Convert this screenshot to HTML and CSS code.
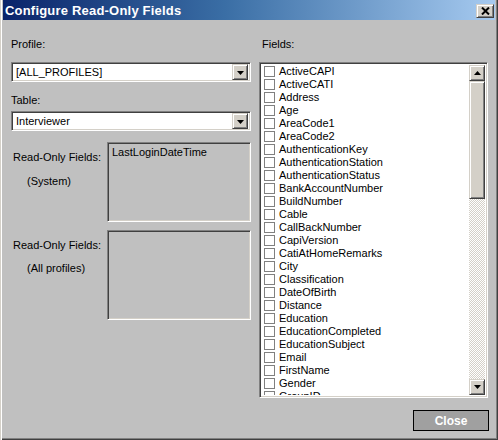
FILE: index.html
```html
<!DOCTYPE html>
<html>
<head>
<meta charset="utf-8">
<title>Configure Read-Only Fields</title>
<link rel="stylesheet" href="styles.css">
</head>
<body>
<div class="window">
  <div class="titlebar">
    <span class="title">Configure Read-Only Fields</span>
    <span class="close-x raised">
      <svg width="9" height="8" viewBox="0 0 9 8"><path d="M1 0.5 L8 7.5 M8 0.5 L1 7.5" stroke="#000" stroke-width="2" fill="none"/></svg>
    </span>
  </div>
  <div class="body">
    <div class="main">
      <div class="left">
        <div class="label">Profile:</div>
        <div class="combo sunken">
          <span class="combo-text">[ALL_PROFILES]</span>
          <span class="combo-btn raised"><svg width="7" height="4" viewBox="0 0 7 4"><path d="M0 0 H7 L3.5 4 Z" fill="#000"/></svg></span>
        </div>
        <div class="label label-table">Table:</div>
        <div class="combo combo-table sunken">
          <span class="combo-text">Interviewer</span>
          <span class="combo-btn raised"><svg width="7" height="4" viewBox="0 0 7 4"><path d="M0 0 H7 L3.5 4 Z" fill="#000"/></svg></span>
        </div>
        <div class="ro-row ro-row-1">
          <div class="ro-labels">
            <div class="ro-title">Read-Only Fields:</div>
            <div class="ro-sub">(System)</div>
          </div>
          <div class="ro-box sunken">LastLoginDateTime</div>
        </div>
        <div class="ro-row ro-row-2">
          <div class="ro-labels">
            <div class="ro-title">Read-Only Fields:</div>
            <div class="ro-sub ro-sub-2">(All profiles)</div>
          </div>
          <div class="ro-box sunken"></div>
        </div>
      </div>
      <div class="right">
        <div class="label fields-label">Fields:</div>
        <div class="list sunken">
          <div class="items">
            <div class="row"><span class="cb"></span>ActiveCAPI</div>
            <div class="row"><span class="cb"></span>ActiveCATI</div>
            <div class="row"><span class="cb"></span>Address</div>
            <div class="row"><span class="cb"></span>Age</div>
            <div class="row"><span class="cb"></span>AreaCode1</div>
            <div class="row"><span class="cb"></span>AreaCode2</div>
            <div class="row"><span class="cb"></span>AuthenticationKey</div>
            <div class="row"><span class="cb"></span>AuthenticationStation</div>
            <div class="row"><span class="cb"></span>AuthenticationStatus</div>
            <div class="row"><span class="cb"></span>BankAccountNumber</div>
            <div class="row"><span class="cb"></span>BuildNumber</div>
            <div class="row"><span class="cb"></span>Cable</div>
            <div class="row"><span class="cb"></span>CallBackNumber</div>
            <div class="row"><span class="cb"></span>CapiVersion</div>
            <div class="row"><span class="cb"></span>CatiAtHomeRemarks</div>
            <div class="row"><span class="cb"></span>City</div>
            <div class="row"><span class="cb"></span>Classification</div>
            <div class="row"><span class="cb"></span>DateOfBirth</div>
            <div class="row"><span class="cb"></span>Distance</div>
            <div class="row"><span class="cb"></span>Education</div>
            <div class="row"><span class="cb"></span>EducationCompleted</div>
            <div class="row"><span class="cb"></span>EducationSubject</div>
            <div class="row"><span class="cb"></span>Email</div>
            <div class="row"><span class="cb"></span>FirstName</div>
            <div class="row"><span class="cb"></span>Gender</div>
            <div class="row"><span class="cb"></span>GroupID</div>
          </div>
          <div class="scrollbar">
            <span class="sb-btn raised"><svg width="7" height="4" viewBox="0 0 7 4"><path d="M0 4 H7 L3.5 0 Z" fill="#000"/></svg></span>
            <span class="sb-thumb raised"></span>
            <span class="sb-track"></span>
            <span class="sb-btn raised"><svg width="7" height="4" viewBox="0 0 7 4"><path d="M0 0 H7 L3.5 4 Z" fill="#000"/></svg></span>
          </div>
        </div>
      </div>
    </div>
    <div class="footer">
      <button class="close-btn">Close</button>
    </div>
  </div>
</div>
</body>
</html>
```
FILE: styles.css
```css
html, body {
  margin: 0;
  padding: 0;
  background: #c0c0c0;
}

.window {
  width: 498px;
  height: 440px;
  box-sizing: border-box;
  padding: 0 3px 3px 3px;
  background: #c0c0c0;
  box-shadow: inset 1px 0 0 #d4d0c8, inset 2px 0 0 #ffffff, inset -1px -1px 0 #404040, inset -2px -2px 0 #808080;
  font-family: "Liberation Sans", Arial, sans-serif;
  font-size: 11px;
  color: #000;
  display: flex;
  flex-direction: column;
}

.titlebar {
  height: 20px;
  flex: none;
  display: flex;
  align-items: center;
  justify-content: space-between;
  padding: 0 1px 0 2px;
  background: linear-gradient(to right, #0a246a 0%, #3a6ea5 45%, #a6caf0 100%);
}

.title {
  color: #fff;
  font-weight: bold;
  font-size: 13px;
  letter-spacing: 0.2px;
}

.raised {
  box-sizing: border-box;
  background: #d4d0c8;
  border: 1px solid;
  border-color: #d4d0c8 #404040 #404040 #d4d0c8;
  box-shadow: inset 1px 1px 0 #ffffff, inset -1px -1px 0 #808080;
  display: flex;
  align-items: center;
  justify-content: center;
}

.sunken {
  box-sizing: border-box;
  border: 1px solid;
  border-color: #808080 #ffffff #ffffff #808080;
  box-shadow: inset 1px 1px 0 #404040, inset -1px -1px 0 #d4d0c8;
}

.close-x {
  width: 18px;
  height: 14px;
  margin-top: 2px;
}

.body {
  flex: 1;
  padding: 18px 7px 6px 8px;
  display: flex;
  flex-direction: column;
}

.main {
  display: grid;
  grid-template-columns: 240px 229px;
  column-gap: 8px;
}

.label {
  line-height: 13px;
  height: 13px;
}

.left {
  display: flex;
  flex-direction: column;
}

.combo {
  margin-top: 11px;
  height: 20px;
  background: #fff;
  display: flex;
  align-items: center;
  padding: 2px 2px 2px 2px;
}

.combo-text {
  flex: 1;
  padding-left: 2px;
  line-height: 16px;
}

.combo-btn {
  width: 16px;
  height: 16px;
}

.combo-btn svg {
  margin-top: 1px;
}

.label-table {
  margin-top: 12px;
}

.combo-table {
  margin-top: 4px;
}

.ro-row {
  display: grid;
  grid-template-columns: 96px 144px;
}

.ro-row-1 {
  margin-top: 11px;
  height: 80px;
}

.ro-row-2 {
  margin-top: 8px;
  height: 90px;
}

.ro-labels {
  padding: 9px 0 0 2px;
  line-height: 13px;
}

.ro-sub {
  margin-top: 11px;
  padding-left: 14px;
}

.ro-sub-2 {
  margin-top: 10px;
}

.ro-box {
  background: #c0c0c0;
  padding: 3px 4px;
  line-height: 13px;
}

.right {
  display: flex;
  flex-direction: column;
}

.fields-label {
  padding-left: 3px;
}

.list {
  margin-top: 11px;
  height: 336px;
  background: #fff;
  padding: 2px;
  display: flex;
  overflow: hidden;
}

.items {
  flex: 1;
  overflow: hidden;
}

.row {
  height: 13px;
  line-height: 13px;
  display: flex;
  align-items: center;
  white-space: nowrap;
}

.cb {
  box-sizing: border-box;
  width: 11px;
  height: 11px;
  border: 1px solid #808080;
  background: #fff;
  margin: 0 4px 0 2px;
  flex: none;
}

.scrollbar {
  width: 16px;
  flex: none;
  display: flex;
  flex-direction: column;
}

.sb-btn {
  width: 16px;
  height: 16px;
  flex: none;
}

.sb-thumb {
  width: 16px;
  height: 118px;
  flex: none;
}

.sb-track {
  flex: 1;
  background: repeating-conic-gradient(#d4d0c8 0 25%, #ffffff 0 50%) 0 0 / 2px 2px;
}

.footer {
  margin-top: 12px;
  display: flex;
  justify-content: flex-end;
}

.close-btn {
  width: 76px;
  height: 21px;
  margin: 0 -1px 0 0;
  padding: 0;
  box-sizing: border-box;
  border: 1px solid #000;
  background: #a0a0a0;
  color: #fff;
  font-family: "Liberation Sans", Arial, sans-serif;
  font-size: 12px;
  font-weight: bold;
}
```
